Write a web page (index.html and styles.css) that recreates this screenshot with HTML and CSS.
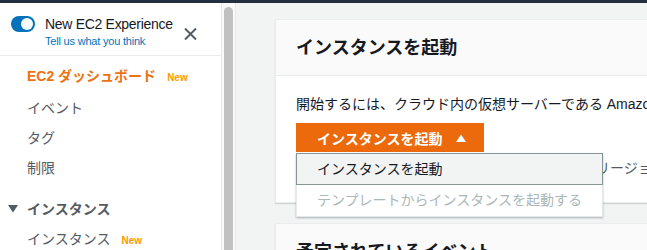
FILE: index.html
```html
<!DOCTYPE html>
<html lang="ja">
<head>
    <meta charset="UTF-8">
    <meta name="viewport" content="width=device-width, initial-scale=1.0">
    <title>EC2 ダッシュボード</title>
    <link rel="stylesheet" href="styles.css">
</head>
<body>

    <div class="topbar"></div>

    <div class="layout">
        <aside class="sidebar">
            <div class="sidebar-head">
                <span class="toggle"><span class="knob"></span></span>
                <div class="exp">
                    <div class="exp-title">New EC2 Experience</div>
                    <a class="exp-link" href="#">Tell us what you think</a>
                </div>
                <svg class="close" width="13" height="12" viewBox="0 0 13 12">
                    <path d="M1 0.5 L12 11.5 M12 0.5 L1 11.5" stroke="#545b64" stroke-width="2" fill="none"/>
                </svg>
            </div>

            <nav class="nav">
                <a class="nav-item active" href="#">EC2 ダッシュボード<span class="new">New</span></a>
                <a class="nav-item" href="#">イベント</a>
                <a class="nav-item" href="#">タグ</a>
                <a class="nav-item" href="#">制限</a>

                <div class="nav-section">
                    <svg class="caret" width="10" height="8" viewBox="0 0 10 8">
                        <path d="M0 0 H10 L5 7.5 Z" fill="#545b64"/>
                    </svg>
                    インスタンス
                </div>
                <a class="nav-item" href="#">インスタンス<span class="new">New</span></a>
            </nav>
        </aside>

        <!-- サイドバーのスクロールバー -->
        <div class="scroll">
            <div class="thumb"></div>
        </div>

        <main class="main">
            <section class="card">
                <h2 class="card-head">インスタンスを起動</h2>
                <div class="card-body">
                    <p class="lead">開始するには、クラウド内の仮想サーバーである Amazon EC2 インスタンスを起動します。</p>
                    <div class="launch">
                        <button class="btn-primary">インスタンスを起動
                            <svg class="up" width="10" height="8" viewBox="0 0 10 8">
                                <path d="M0 8 H10 L5 0.5 Z" fill="#fff"/>
                            </svg>
                        </button>
                        <ul class="menu">
                            <li class="menu-item hover">インスタンスを起動</li>
                            <li class="menu-item disabled">テンプレートからインスタンスを起動する</li>
                        </ul>
                    </div>
                    <p class="note">注: インスタンスはアジアパシフィック（東京）リージョンで起動します</p>
                </div>
            </section>

            <section class="card">
                <h2 class="card-head">予定されているイベント</h2>
            </section>
        </main>
    </div>

</body>
</html>
```

FILE: styles.css
```css
html, body {
    margin: 0;
    height: 250px;
    overflow: hidden;
}

body {
    font-family: "Liberation Sans", "Noto Sans CJK JP", sans-serif;
    font-size: 14px;
    color: #16191f;
    background: #f2f3f3;
}

.topbar {
    height: 3px;
    background: #232f3e;
}

.layout {
    display: flex;
    height: 247px;
}

/* サイドバー */
.sidebar {
    width: 221px;
    flex-shrink: 0;
    background: #fff;
}

.sidebar-head {
    display: flex;
    align-items: flex-start;
    height: 40px;
    padding: 12px 24px 0 11px;
    border-bottom: 1px solid #eaeded;
}

.toggle {
    position: relative;
    width: 24px;
    height: 16px;
    margin-top: 1px;
    border-radius: 8px;
    background: #0073bb;
    flex-shrink: 0;
}

.knob {
    position: absolute;
    top: 2px;
    right: 2px;
    width: 12px;
    height: 12px;
    border-radius: 50%;
    background: #fff;
}

.exp {
    margin-left: 10px;
}

.exp-title {
    font-size: 14px;
    line-height: 18px;
    letter-spacing: -0.3px;
    color: #16191f;
}

.exp-link {
    display: block;
    font-size: 11px;
    line-height: 16px;
    letter-spacing: -0.2px;
    color: #0073bb;
    text-decoration: none;
}

.close {
    margin-left: auto;
    margin-top: 13px;
}

.nav {
    padding-top: 5px;
}

.nav-item {
    display: block;
    padding-left: 27px;
    line-height: 30px;
    color: #545b64;
    text-decoration: none;
    white-space: nowrap;
}

.nav-item.active {
    color: #ec7211;
    font-weight: bold;
}

.new {
    margin-left: 11px;
    font-size: 10px;
    font-weight: bold;
    color: #ff9900;
}

.nav-section {
    display: flex;
    align-items: center;
    margin-top: 11px;
    padding-left: 8px;
    line-height: 30px;
    font-weight: bold;
    color: #545b64;
}

.caret {
    margin-right: 9px;
}

/* スクロールバー */
.scroll {
    width: 13px;
    flex-shrink: 0;
    background: #fafafa;
    border-left: 1px solid #e8e8e8;
    border-right: 1px solid #e8e8e8;
    overflow: hidden;
}

.thumb {
    width: 9px;
    height: 400px;
    margin: 4px 0 0 2px;
    border-radius: 5px;
    background: #c1c1c1;
}

/* メイン */
.main {
    flex: 1;
    min-width: 0;
    padding: 16px 0 0 39px;
    overflow: hidden;
}

.card {
    width: 500px;
    margin-bottom: 20px;
    background: #fff;
    border: 1px solid #eaeded;
    box-shadow: 0 1px 1px rgba(0, 28, 36, 0.15);
}

.card-head {
    margin: 0;
    padding: 17px 20px 16px;
    font-size: 18px;
    line-height: 22px;
    font-weight: bold;
    color: #16191f;
    background: #fafafa;
    border-bottom: 1px solid #eaeded;
    white-space: nowrap;
}

.card-body {
    padding: 18px 20px 24px;
}

.lead {
    margin: 0;
    line-height: 20px;
    white-space: nowrap;
}

.launch {
    position: relative;
    margin-top: 9px;
    display: inline-block;
}

.btn-primary {
    display: flex;
    align-items: center;
    height: 29px;
    padding: 0 18px 0 21px;
    border: none;
    background: #ec6a0c;
    color: #fff;
    font-family: inherit;
    font-size: 14px;
    font-weight: bold;
}

.up {
    margin-left: 14px;
}

.menu {
    position: absolute;
    top: 30px;
    left: 0;
    width: 307px;
    margin: 0;
    padding: 0;
    list-style: none;
    background: #fff;
    box-shadow: 0 1px 2px rgba(0, 28, 36, 0.3);
    z-index: 2;
}

.menu-item {
    padding-left: 20px;
    white-space: nowrap;
}

.menu-item.hover {
    height: 30px;
    line-height: 30px;
    background: #f2f3f3;
    border: 1px solid #879596;
}

.menu-item.disabled {
    height: 31px;
    line-height: 30px;
    color: #aab7b8;
    border: 1px solid #e6e9e9;
    border-top: none;
}

.note {
    margin: 6px 0 0;
    line-height: 20px;
    color: #545b64;
    white-space: nowrap;
}
```
